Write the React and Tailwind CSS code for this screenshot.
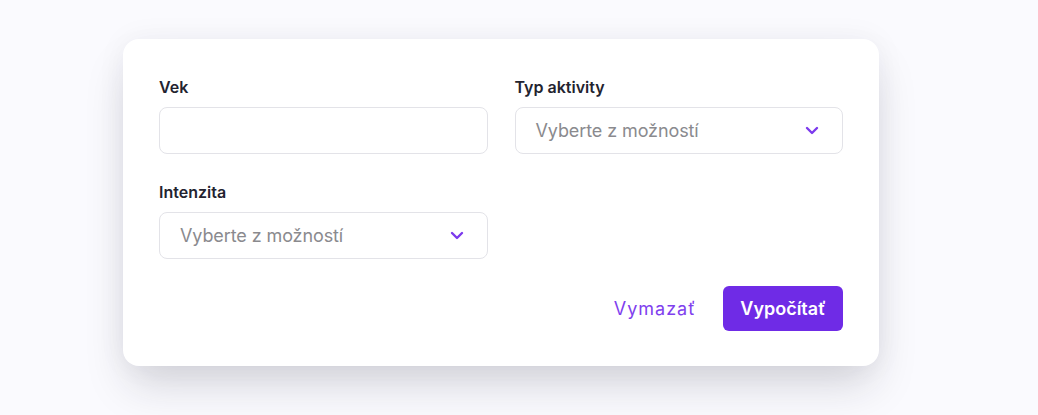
import React, { useState } from "react";

const Chevron = () => (
  <svg width="14" height="9" viewBox="0 0 14 9" fill="none" className="shrink-0">
    <path d="M2 2l5 5 5-5" stroke="#7c3aed" strokeWidth="2.4" strokeLinecap="round" strokeLinejoin="round" />
  </svg>
);

const Field = ({ label, children }) => (
  <div className="flex flex-col">
    <label className="text-[16px] leading-[21px] font-semibold text-[#23232f] mb-[9px]">{label}</label>
    {children}
  </div>
);

const SelectBox = ({ value }) => (
  <button
    type="button"
    className="h-[47px] w-full flex items-center justify-between pl-[20px] pr-[23px] rounded-lg border border-[#e3e3e8] bg-white text-left"
  >
    <span className="text-[18px] text-[#8a8a8e] tracking-[-0.1px]">{value || "Vyberte z možností"}</span>
    <Chevron />
  </button>
);

export default function App() {
  const [age, setAge] = useState("");

  return (
    <div
      className="min-h-[415px] bg-[#fafafe] pt-[39px] pb-[50px]"
      style={{ fontFamily: "Inter, 'Noto Sans', sans-serif" }}
    >
      <div className="ml-[123px] w-[756px] bg-white rounded-2xl px-[36px] pt-[38px] pb-[35px] shadow-[0_24px_44px_-6px_rgba(30,30,50,0.17),0_0_30px_rgba(30,30,60,0.05)]">
        <div className="grid grid-cols-2 gap-x-[27px] gap-y-[28px]">
          <Field label="Vek">
            <input
              value={age}
              onChange={(e) => setAge(e.target.value)}
              className="h-[47px] w-full rounded-lg border border-[#e3e3e8] px-5 text-[18px] outline-none"
            />
          </Field>
          <Field label="Typ aktivity">
            <SelectBox />
          </Field>
          <Field label="Intenzita">
            <SelectBox />
          </Field>
        </div>

        <div className="flex justify-end items-center gap-[27px] mt-[27px]">
          <button type="button" className="text-[18px] text-[#8040ee] tracking-[1px]">
            Vymazať
          </button>
          <button
            type="button"
            className="h-[45px] w-[120px] rounded-md bg-[#6f2be6] text-white text-[18px] font-semibold"
          >
            Vypočítať
          </button>
        </div>
      </div>
    </div>
  );
}
